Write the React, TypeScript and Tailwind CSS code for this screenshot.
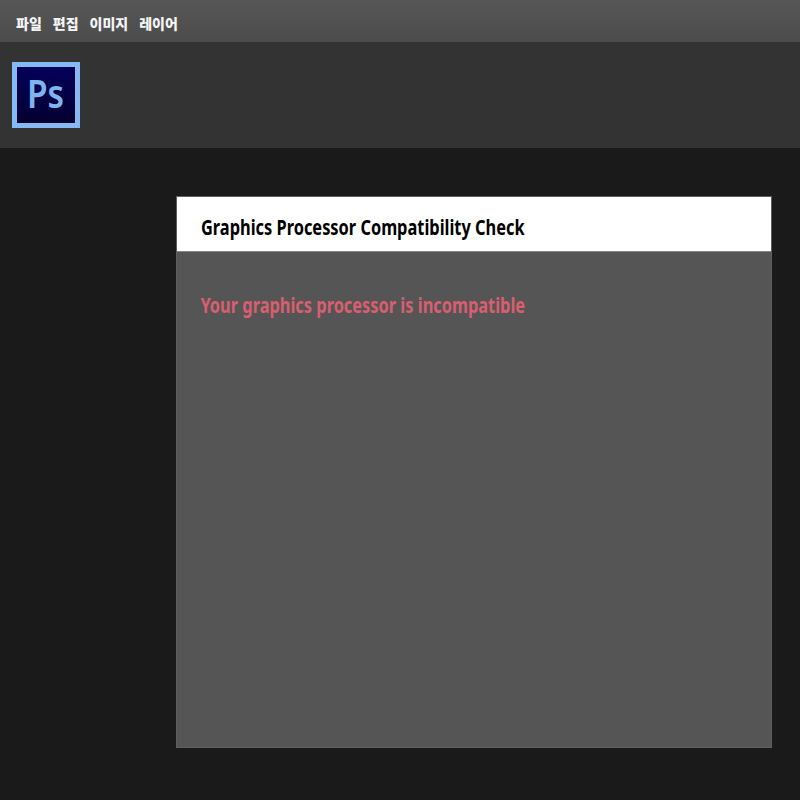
const menus = ["파일", "편집", "이미지", "레이어"];

function PsLogo() {
  return (
    <svg width="68" height="66" viewBox="0 0 68 66" className="block">
      <defs>
        <linearGradient id="psBg" x1="0" y1="0" x2="0" y2="1">
          <stop offset="0" stopColor="#03005a" />
          <stop offset="1" stopColor="#040030" />
        </linearGradient>
      </defs>
      <rect width="68" height="66" fill="#86b9f3" />
      <rect x="5" y="5" width="58" height="56" fill="url(#psBg)" />
      <text
        x="15"
        y="46"
        fill="#7fb4f0"
        fontSize="39"
        fontWeight="600"
        fontFamily="'Noto Sans', sans-serif"
        textLength="37"
        lengthAdjust="spacingAndGlyphs"
      >
        Ps
      </text>
    </svg>
  );
}

export default function App() {
  return (
    <div className="flex h-[800px] w-[800px] flex-col overflow-hidden bg-[#1a1a1a] font-['Noto_Sans','Noto_Sans_CJK_KR',sans-serif]">
      <div className="flex h-[42px] items-center gap-[11px] bg-gradient-to-b from-[#565656] to-[#4c4c4c] pl-[16px] pt-[4px] font-['Noto_Sans_CJK_KR',sans-serif] text-[14px] font-black text-[#f5f5f5]">
        {menus.map((m) => (
          <span key={m}>{m}</span>
        ))}
      </div>

      <div className="flex h-[106px] items-start bg-[#333333] pl-[12px] pt-[20px]">
        <PsLogo />
      </div>

      <div className="pl-[177px] pt-[49px]">
        <div className="h-[550px] w-[594px] bg-[#555555] outline outline-1 outline-[#5f5f5f]">
          <div className="flex h-[55px] items-center border-b border-[#888888] bg-white pl-[24px] pt-[7px]">
            <h1 className="origin-left scale-x-[0.78] whitespace-nowrap text-[21px] font-bold text-black">
              Graphics Processor Compatibility Check
            </h1>
          </div>
          <p className="origin-left scale-x-[0.78] whitespace-nowrap pl-[30px] pt-[38px] text-[21px] font-bold leading-[30px] text-[#d85f6f]">
            Your graphics processor is incompatible
          </p>
        </div>
      </div>
    </div>
  );
}
